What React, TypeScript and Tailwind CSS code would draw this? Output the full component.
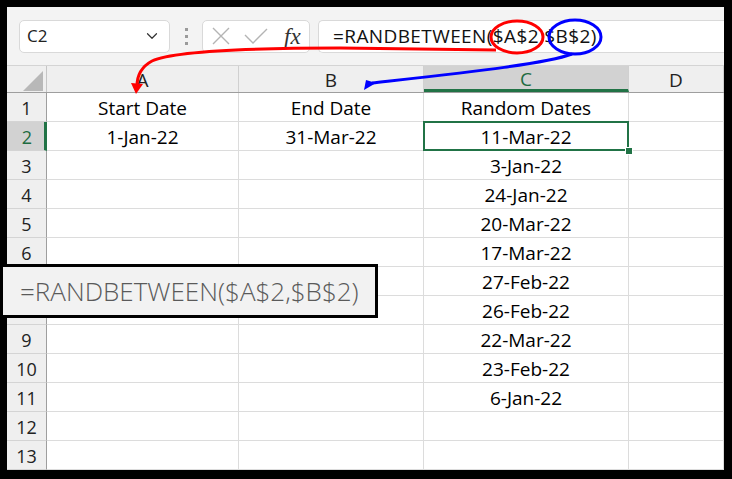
import { ChevronDown } from "lucide-react";

const cols = [
  { key: "A", w: "w-[192px]" },
  { key: "B", w: "w-[185px]" },
  { key: "C", w: "w-[205px]" },
  { key: "D", w: "w-[95px]" },
];

const rows: string[][] = [
  ["Start Date", "End Date", "Random Dates", ""],
  ["1-Jan-22", "31-Mar-22", "11-Mar-22", ""],
  ["", "", "3-Jan-22", ""],
  ["", "", "24-Jan-22", ""],
  ["", "", "20-Mar-22", ""],
  ["", "", "17-Mar-22", ""],
  ["", "", "27-Feb-22", ""],
  ["", "", "26-Feb-22", ""],
  ["", "", "22-Mar-22", ""],
  ["", "", "23-Feb-22", ""],
  ["", "", "6-Jan-22", ""],
  ["", "", "", ""],
  ["", "", "", ""],
];

function FormulaBar() {
  return (
    <div className="h-[58px] bg-[#f3f3f3] flex items-center pl-[12px] gap-0">
      <div className="w-[151px] h-[33px] bg-white border border-[#d9d9d9] rounded-[5px] flex items-center justify-between pl-[7px] pr-[8px]">
        <span className="text-[17px] text-[#222]">C2</span>
        <ChevronDown size={18} strokeWidth={1.6} className="text-[#333]" />
      </div>
      <div className="w-[32px] flex flex-col items-center gap-[4px]">
        <span className="w-[3px] h-[3px] bg-[#9a9a9a]" />
        <span className="w-[3px] h-[3px] bg-[#9a9a9a]" />
        <span className="w-[3px] h-[3px] bg-[#9a9a9a]" />
      </div>
      <div className="w-[108px] h-[33px] bg-white border border-[#d9d9d9] rounded-[5px] flex items-center pl-[8px]">
        <svg width="20" height="20" viewBox="0 0 20 20" className="mr-[13px]">
          <path d="M2 2 L18 18 M18 2 L2 18" stroke="#b4b4b4" strokeWidth="1.4" fill="none" />
        </svg>
        <svg width="24" height="18" viewBox="0 0 24 18" className="mr-[16px]">
          <path d="M1 8 L9 16 L23 2" stroke="#b4b4b4" strokeWidth="1.4" fill="none" />
        </svg>
        <span className="text-[23px] italic text-[#333] leading-none" style={{ fontFamily: '"Liberation Serif", serif' }}>
          fx
        </span>
      </div>
      <div className="flex-1 ml-[8px] h-[33px] bg-white border-y border-l border-[#d9d9d9] rounded-l-[5px] flex items-center pl-[14px] pt-[1px]">
        <span className="text-[19px] text-[#111] tracking-[0.4px]">=RANDBETWEEN($A$2,$B$2)</span>
      </div>
    </div>
  );
}

function Grid() {
  return (
    <div className="flex flex-col">
      <div className="flex h-[28px] bg-[#efefef] border-t border-[#d4d4d4] border-b border-b-[#9e9e9e]">
        <div className="w-[40px] border-r border-[#c6c6c6] relative">
          <svg width="40" height="27" viewBox="0 0 40 27" className="absolute inset-0">
            <polygon points="16,25 36,5 36,25" fill="#b8b8b8" />
          </svg>
        </div>
        {cols.map((c) => (
          <div
            key={c.key}
            className={`${c.w} flex items-center justify-center text-[19px] border-r border-[#d0d0d0] pt-[2px] ${
              c.key === "C" ? "bg-[#d2d2d2] text-[#1d6b40] border-b-[3px] border-b-[#217346] pt-[4px]" : "text-[#222]"
            }`}
          >
            {c.key}
          </div>
        ))}
      </div>
      {rows.map((r, i) => (
        <div key={i} className="flex h-[29px]">
          <div
            className={`w-[40px] flex items-center justify-center text-[18px] border-b border-[#d4d4d4] pt-[2px] ${
              i === 1
                ? "bg-[#d2d2d2] text-[#1d6b40] border-r-[3px] border-r-[#217346] pl-[3px]"
                : "bg-[#efefef] text-[#222] border-r border-r-[#9e9e9e]"
            }`}
          >
            {i + 1}
          </div>
          {cols.map((c, j) => (
            <div
              key={c.key}
              className={`${c.w} relative flex items-center justify-center text-[19px] text-black border-r border-b border-[#dcdcdc] pt-[3px]`}
            >
              {r[j]}
              {i === 1 && j === 2 && (
                <>
                  <div className="absolute z-10 -left-px -top-px -right-px -bottom-px border-2 border-[#217346]" />
                  <div className="absolute z-20 -right-[5px] -bottom-[5px] w-[8px] h-[8px] bg-[#217346] border border-white" />
                </>
              )}
            </div>
          ))}
        </div>
      ))}
    </div>
  );
}

export default function App() {
  return (
    <div
      className="relative w-[732px] h-[479px] bg-black pl-[7px] pt-[7px] pr-[8px] pb-[9px] overflow-hidden"
      style={{ fontFamily: '"Open Sans", "Noto Sans", sans-serif' }}
    >
      <div className="w-[717px] h-[463px] bg-white overflow-hidden">
        <FormulaBar />
        <Grid />
      </div>

      {/* callout with the formula */}
      <div className="absolute z-30 left-0 top-[264px] w-[378px] h-[54px] bg-[#f2f2f2] border-[3px] border-black flex items-center pl-[17px]">
        <span className="text-[26px] font-light text-[#5a5a5a]">=RANDBETWEEN($A$2,$B$2)</span>
      </div>

      {/* reference arrows */}
      <svg className="absolute z-40 inset-0 pointer-events-none" width="732" height="479" viewBox="0 0 732 479">
        <ellipse cx="517" cy="37" rx="26" ry="16" fill="none" stroke="#ff0000" strokeWidth="3" />
        <path d="M496 50 L340 48 C260 48 175 50 152 61 C141 67 137 76 137 86" fill="none" stroke="#ff0000" strokeWidth="3" />
        <polygon points="136,94 131,83 143,84" fill="#ff0000" />
        <ellipse cx="575" cy="37" rx="26" ry="17" fill="none" stroke="#0000ff" strokeWidth="3" />
        <path d="M572 54 C545 64 470 72 372 83" fill="none" stroke="#0000ff" strokeWidth="3" />
        <polygon points="364,90 366,80 376,83" fill="#0000ff" />
      </svg>
    </div>
  );
}
